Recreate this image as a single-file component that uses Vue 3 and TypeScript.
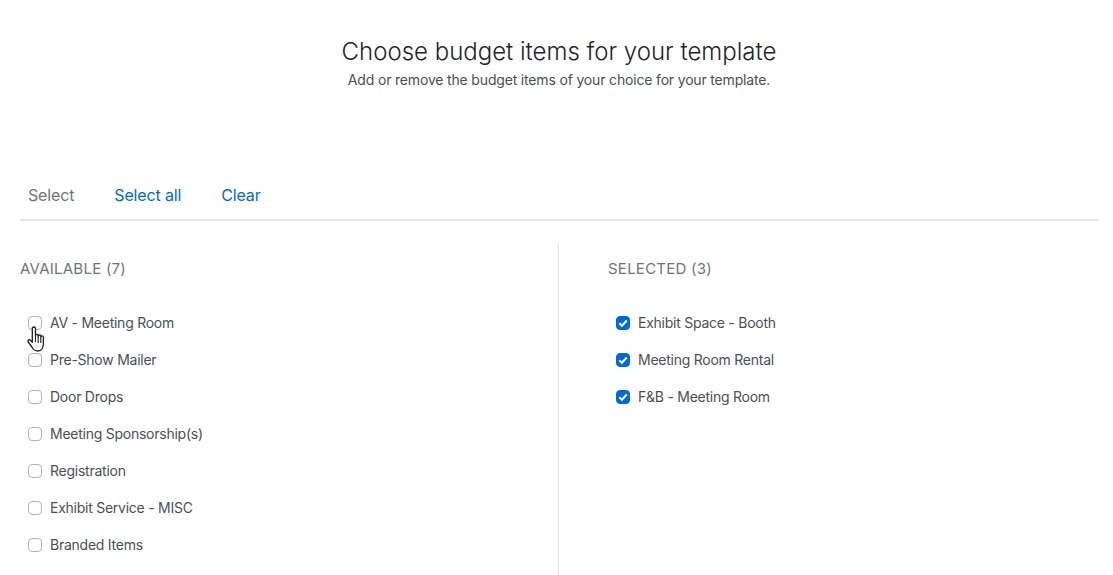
<script setup lang="ts">
const available: string[] = ['AV - Meeting Room', 'Pre-Show Mailer', 'Door Drops', 'Meeting Sponsorship(s)', 'Registration', 'Exhibit Service - MISC', 'Branded Items']
const selected: string[] = ['Exhibit Space - Booth', 'Meeting Room Rental', 'F&B - Meeting Room']
</script>

<template>
  <div class="page">
    <header class="head">
      <h1>Choose budget items for your template</h1>
      <p>Add or remove the budget items of your choice for your template.</p>
    </header>
    <nav class="tools">
      <span class="lbl">Select</span>
      <a>Select all</a>
      <a>Clear</a>
    </nav>
    <div class="cols">
      <section class="left">
        <h2>AVAILABLE (7)</h2>
        <ul>
          <li v-for="it in available" :key="it">
            <span class="box"></span>
            {{ it }}
          </li>
        </ul>
      </section>
      <section class="right">
        <h2>SELECTED (3)</h2>
        <ul>
          <li v-for="it in selected" :key="it">
            <span class="box on">
              <svg viewBox="0 0 14 14" width="14" height="14"><path d="M3.300 7.200 5.900 9.800 10.800 4.500" fill="none" stroke="#fff" stroke-width="2"/></svg>
            </span>
            {{ it }}
          </li>
        </ul>
      </section>
    </div>
    <svg class="hand" viewBox="0 0 18 26" width="18" height="26">
      <path d="M6.900 1c1 0 1.600.7 1.600 1.700V10c0-2.300 2.700-2.300 2.700 0v.5c0-2 2.600-2 2.600 0v.8c0-1.800 2.600-1.800 2.600.2v6c0 3.500-1.600 7.500-5.500 7.500-3.300 0-4.500-1.400-5.700-3.500L1.300 16c-1-1.600.8-3 2.100-1.800l1.900 2V2.700C5.300 1.700 5.900 1 6.900 1z" fill="#fff" stroke="#1d2125" stroke-width="1.300" stroke-linejoin="round"/>
      <path d="M8.500 10v6M11.200 11v6M13.800 11.500v5.500" stroke="#1d2125" stroke-width="1.100" fill="none"/>
    </svg>
  </div>
</template>

<style>
html, body { margin: 0; background: #fff; overflow: hidden; }
</style>

<style scoped>
.page { position: relative; width: 1113px; height: 575px; overflow: hidden; font-family: Inter, Roboto, sans-serif; color: #495057; box-sizing: border-box; padding: 0 15px 0 20px; }
.head { text-align: center; padding-top: 38px; height: 173px; box-sizing: border-box; }
h1 { margin: 0; font-size: 24px; font-weight: 300; line-height: 28px; color: #212529; }
.head p { margin: 0; font-size: 14px; line-height: 28px; color: #495057; letter-spacing: -.17px; }
.tools { display: flex; gap: 40px; height: 43px; align-items: center; padding-left: 8px; padding-bottom: 3px; border-bottom: 2px solid #e5e5e5; font-size: 16px; letter-spacing: -.15px; }
.tools .lbl { color: #6c757d; }
.tools a { color: #0069d9; }
.cols { display: flex; height: 330px; margin-top: 24px; }
.left { width: 538px; border-right: 1px solid #dee2e6; }
.right { padding-left: 49px; }
h2 { margin: 0; font-size: 15px; font-weight: 400; color: #6c757d; letter-spacing: .25px; line-height: 20px; padding-top: 14px; margin-bottom: 25px; }
ul { list-style: none; margin: 0; padding: 0 0 0 8px; }
li { display: flex; align-items: center; height: 37px; font-size: 14px; gap: 8px; letter-spacing: -.25px; }
.box { width: 12px; height: 12px; border: 1px solid #adb5bd; border-radius: 4px; background: #fff; flex: none; display: flex; }
.box.on { background: #0069d9; border-color: #0069d9; }
.box.on svg { margin: -1px; flex: none; }
.hand { position: absolute; left: 27px; top: 326px; }
</style>
